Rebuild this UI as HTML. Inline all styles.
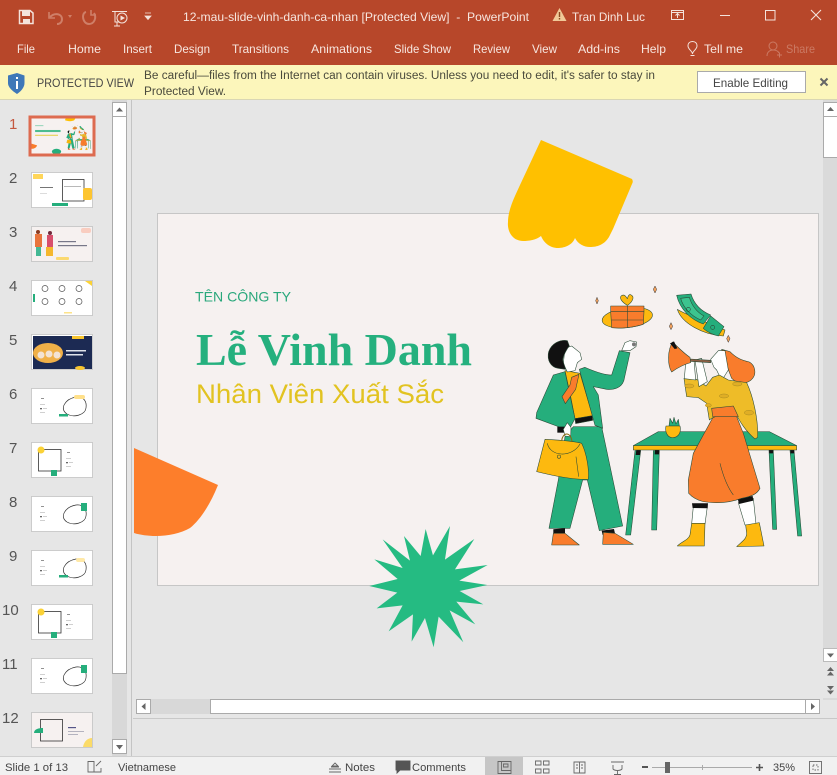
<!DOCTYPE html>
<html lang="en"><head><meta charset="utf-8"><title>PowerPoint</title>
<style>
html,body{margin:0;padding:0;background:#e6e6e6;overflow:hidden}
svg{display:block}
text{font-family:"Liberation Sans","Noto Sans CJK JP",sans-serif}
.t{fill:#f7e6df;font-size:12px}
.y{fill:#4a4a3c;font-size:11.5px}
.s{fill:#444;font-size:11px}
.n{fill:#555;font-size:15px}
</style></head><body>
<svg xmlns="http://www.w3.org/2000/svg" width="837" height="775" viewBox="0 0 837 775">
<defs>
<g id="ill">
 <!-- table, woman, gift, money: coordinates in 3x crop space from (590,280) -->
 <g transform="translate(590,280) scale(.3333)" stroke="#2a4a36" stroke-width="1.700" stroke-linejoin="round">
  <path d="M135 512H152L122 765H107Z M190 512H208L200 750H185Z M537 510H550L560 748H548Z M600 510H612L635 768H623Z" fill="#25ae7c"/>
  <path d="M139 510H152L150 525H137Z M195 510H208L207 523H194Z M537 508H549L549 520H538Z M601 508H612L613 520H602Z" fill="#111" stroke="none"/>
  <path d="M205 455H538L620 497H130Z" fill="#25ae7c"/>
  <path d="M130 497H620V510H130Z" fill="#fdb90f"/>
  <path d="M237 438L240 415L248 430L252 412L258 432L265 418L268 438Z" fill="#25ae7c"/>
  <path d="M228 438H270C274 455 268 472 248 473C232 473 224 455 228 438Z" fill="#fdb90f"/>
  <path d="M310 680L352 680L345 732H305Z M445 668L490 655L498 732L465 735Z" fill="#fff"/>
  <path d="M306 670L354 670L353 685L308 684Z M443 655L488 648L490 662L447 672Z" fill="#111" stroke="none"/>
  <path d="M305 730L345 730L343 798H262C275 785 295 780 300 765Z M467 735L508 728L522 798L440 800C455 785 470 778 470 760Z" fill="#fdb90f"/>
  <path d="M395 208L420 215C440 235 455 240 478 246C495 255 500 280 488 295C475 312 445 315 425 295C415 270 405 240 395 208Z" fill="#f97c2c"/>
  <path d="M362 238L385 212L405 212L415 270L395 302L380 270L372 262Z" fill="#fff"/>
  <path d="M370 410H440L460 460L510 625C500 645 480 650 455 655C420 668 385 672 340 665C320 660 305 650 296 640L295 600L310 520Z" fill="#f97c2c"/>
  <path d="M390 550C400 590 415 625 430 645" fill="none"/>
  <path d="M282 295L320 298L348 318L368 292L388 285L415 300L470 308C490 350 505 420 503 472L495 477C470 455 450 430 430 385L365 415L358 420L350 370L325 353L290 350Z" fill="#eebc28"/>
  <path d="M365 385L430 378L445 410H368Z" fill="#f97c2c"/>
  <g fill="#e0ae25" stroke="#a98a20" stroke-width="1.500"><ellipse cx="402" cy="348" rx="14" ry="6"/><ellipse cx="442" cy="312" rx="14" ry="6"/><ellipse cx="477" cy="398" rx="14" ry="7"/><ellipse cx="355" cy="376" rx="9" ry="5"/><ellipse cx="298" cy="318" rx="14" ry="6"/></g>
  <path d="M287 250L312 240L317 300L283 296Z M315 240L335 235L352 305L327 320Z" fill="#fff"/>
  <path d="M300 237L362 241V248L300 244Z" fill="#8f5e44"/>
  <path d="M248 186C262 200 285 222 300 232L302 248C285 252 265 262 245 276C232 255 232 210 248 186Z" fill="#f97c2c"/>
  <path d="M240 190L252 184L262 205L254 207Z" fill="#111" stroke="none"/>
  <ellipse cx="112" cy="113" rx="76" ry="30" transform="rotate(-7 112 113)" fill="#fdb90f"/>
  <path d="M62 78H162V94L160 133C130 143 90 146 65 143L62 94Z" fill="#f97c2c"/>
  <path d="M62 94H162M112 78V143M65 120H160" fill="none"/>
  <path d="M112 76C95 66 85 52 96 46C104 43 108 50 112 56C116 42 120 42 125 46C135 52 125 68 112 76Z" fill="#fdb90f"/>
  <path d="M262 88C275 130 340 165 400 168L405 150C360 130 300 110 262 88Z" fill="#fdb90f"/>
  <path d="M260 46L303 42C310 65 325 90 362 105L340 132C305 120 270 90 260 46Z" fill="#25ae7c"/>
  <path d="M272 55L298 52C305 75 318 95 342 108L332 120C305 108 280 85 272 55Z" fill="#3cc48f"/>
  <path d="M362 108L402 140L385 168C370 165 350 155 340 145Z" fill="#25ae7c"/>
  <circle cx="295" cy="88" r="6" fill="none"/><circle cx="368" cy="142" r="6" fill="none"/>
  <path d="M21 52L25 62L21 72L17 62Z M195 18L200 28L195 39L190 28Z M243 128L248 139L243 149L238 139Z M415 166L420 176L415 187L410 176Z" fill="#f5a25d" stroke="#333" stroke-width="1.500"/>
 </g>
 <!-- man: 3x crop space from (530,280) -->
 <g transform="translate(530,280) scale(.3333)" stroke="#2a4a36" stroke-width="1.700" stroke-linejoin="round">
  <path d="M130 440L215 440L278 738L208 752L172 600L158 600L120 745L57 745L85 600L105 470Z" fill="#25ae7c"/>
  <path d="M70 748L105 745V765H70Z M215 752L252 747L256 765H218Z" fill="#111" stroke="none"/>
  <path d="M70 760L105 760L148 795H65Z M220 757L255 760L310 793H218Z" fill="#f97c2c"/>
  <path d="M105 272L150 280L188 408L135 416L122 350Z" fill="#fdb90f"/>
  <path d="M135 416L187 407L188 421L137 431Z" fill="#111"/>
  <path d="M70 285L20 398L18 415L85 440L110 462L135 416L105 275Z" fill="#25ae7c"/>
  <path d="M148 268L165 262C195 275 225 285 245 285L268 212L300 218L282 300C275 325 250 330 230 328L190 320L205 345L218 445L195 436Z" fill="#25ae7c"/>
  <path d="M82 440H108V458H82Z" fill="#111" stroke="none"/>
  <path d="M100 448L112 428L123 442L122 470L105 468Z" fill="#fff"/>
  <path d="M125 292L147 283L137 328L106 371L96 350L120 315Z" fill="#f97c2c"/>
  <path d="M105 205L125 198L150 218L155 238L142 248L135 272L112 276L100 250Z" fill="#fff"/>
  <path d="M112 182C90 178 65 190 56 215C50 240 62 262 85 265L107 268L98 240C100 225 112 205 118 198Z" fill="#111"/>
  <path d="M275 212L285 188L300 182L320 186L318 200L300 212Z" fill="#fff"/>
  <circle cx="312" cy="193" r="6" fill="#777" stroke="none"/>
  <path d="M95 482C97 458 122 452 126 485" fill="none" stroke-width="3" stroke="#8a6a10"/>
  <path d="M45 478C80 480 125 482 155 490C170 520 178 570 175 598C130 600 60 585 20 575Z" fill="#fdb90f"/>
  <path d="M52 490C60 530 125 535 150 492M138 530L146 590" fill="none"/>
  <circle cx="87" cy="530" r="5" fill="#fdb90f"/>
 </g>
</g>
<path id="oval" d="M14 1C22 0 25 6 24 12C23 19 12 22 5 18C-3 13 3 3 14 1Z" fill="none" stroke="#333" stroke-width=".7"/>
<g id="lines" fill="#bbb"><rect x="0" y="0" width="3" height=".8" fill="#777"/><rect x="-1" y="6" width="5" height=".7"/><rect x="-1" y="10" width="2" height="1.300" fill="#666"/><rect x="2" y="10" width="4" height=".7"/><rect x="-1" y="14" width="5" height=".7"/></g>
</defs>

<rect width="837" height="775" fill="#e6e6e6"/>

<!-- title + tab bar -->
<rect width="837" height="65" fill="#b7472a"/>
<g fill="none" stroke="#f4e3dc">
 <path d="M19.500 10.500H30L33 13V23.500H19.500Z" stroke-width="1.500"/>
 <rect x="22" y="11" width="8" height="5" fill="#f4e3dc" stroke="none"/>
 <rect x="23" y="19" width="7" height="5" fill="#f4e3dc" stroke="none"/>
</g>
<g fill="none" stroke="#cf7f68" stroke-width="2">
 <path d="M50 17C55 12 62 14 62 19C62 22 60 24 57 24"/><path d="M49 12V18H55" stroke-width="1.600"/>
 <path d="M86 12C81 13 82.500 24 89 24C94 24 97 18 94 13"/><path d="M91 10V15H96" stroke-width="1.600"/>
</g>
<path d="M68 15L72 15L70 18Z" fill="#cf7f68"/>
<g fill="none" stroke="#f4e3dc" stroke-width="1">
 <path d="M112 11.500H127M115 11.500V22H119M117 22V26M114 26H120"/>
 <circle cx="122" cy="18" r="5"/>
 <path d="M120.500 15.500L125 18L120.500 20.500Z" fill="#f4e3dc" stroke="none"/>
</g>
<path d="M145 13H151M145 16H151L148 19.500Z" fill="#f4e3dc" stroke="#f4e3dc" stroke-width=".8"/>
<text class="t" x="183" y="21" textLength="346" lengthAdjust="spacingAndGlyphs" xml:space="preserve">12-mau-slide-vinh-danh-ca-nhan [Protected View]  -  PowerPoint</text>
<path d="M559.500 8L566.500 21H552.500Z" fill="#f1c998"/><rect x="558.800" y="12" width="1.400" height="5" fill="#8a4a20"/><rect x="558.800" y="18" width="1.400" height="1.500" fill="#8a4a20"/>
<text class="t" x="572" y="21" textLength="73" lengthAdjust="spacingAndGlyphs">Tran Dinh Luc</text>
<g fill="none" stroke="#f4e3dc" stroke-width="1">
 <rect x="671.500" y="10.500" width="12" height="9"/><path d="M671.500 12.500H683.500M677.500 18V14M675.500 15.500L677.500 13.500L679.500 15.500"/>
 <path d="M720 15.500H730"/><rect x="765.500" y="10.500" width="9.500" height="9.500"/>
 <path d="M811 10L821 20M821 10L811 20" stroke-width="1.100"/>
</g>
<text class="t" x="17" y="53" textLength="18" lengthAdjust="spacingAndGlyphs">File</text>
<text class="t" x="68" y="53" textLength="33" lengthAdjust="spacingAndGlyphs">Home</text>
<text class="t" x="123" y="53" textLength="29" lengthAdjust="spacingAndGlyphs">Insert</text>
<text class="t" x="174" y="53" textLength="36" lengthAdjust="spacingAndGlyphs">Design</text>
<text class="t" x="232" y="53" textLength="57" lengthAdjust="spacingAndGlyphs">Transitions</text>
<text class="t" x="311" y="53" textLength="61" lengthAdjust="spacingAndGlyphs">Animations</text>
<text class="t" x="394" y="53" textLength="57" lengthAdjust="spacingAndGlyphs">Slide Show</text>
<text class="t" x="473" y="53" textLength="37" lengthAdjust="spacingAndGlyphs">Review</text>
<text class="t" x="532" y="53" textLength="25" lengthAdjust="spacingAndGlyphs">View</text>
<text class="t" x="578" y="53" textLength="42" lengthAdjust="spacingAndGlyphs">Add-ins</text>
<text class="t" x="641" y="53" textLength="25" lengthAdjust="spacingAndGlyphs">Help</text>
<text class="t" x="704" y="53" textLength="39" lengthAdjust="spacingAndGlyphs">Tell me</text>
<text x="786" y="53" font-size="12" fill="#cb7a64" textLength="29" lengthAdjust="spacingAndGlyphs">Share</text>
<path d="M692.500 54C692.500 51 688 49.500 688 46C688 43 690 41.500 692.500 41.500C695 41.500 697 43 697 46C697 49.500 692.500 51 692.500 54ZM690.500 55.500H694.500" fill="none" stroke="#f4e3dc" stroke-width="1"/>
<g fill="none" stroke="#cb7a64" stroke-width="1"><circle cx="773" cy="46" r="4"/><path d="M767 56C767 51 771 50 773 50C776 50 778 51 779 53M777 55H782M779.500 52.500V57.500"/></g>

<!-- protected view bar -->
<rect y="65" width="837" height="34" fill="#fcf6bb"/>
<rect y="99" width="837" height="1" fill="#d9d6b4"/>
<path d="M17 73L24.500 75.500V83C24.500 88 20 92 17 94C14 92 8 88 8 83V75.500Z" fill="#3f78b8"/>
<rect x="16" y="77" width="2" height="2" fill="#fff"/><rect x="16" y="81" width="2" height="8" fill="#fff"/>
<text x="37" y="87" font-size="12" fill="#444" textLength="97" lengthAdjust="spacingAndGlyphs">PROTECTED VIEW</text>
<text class="y" x="144" y="79" textLength="511" lengthAdjust="spacingAndGlyphs">Be careful—files from the Internet can contain viruses. Unless you need to edit, it's safer to stay in</text>
<text class="y" x="144" y="95" textLength="82" lengthAdjust="spacingAndGlyphs">Protected View.</text>
<rect x="697.500" y="71.500" width="108" height="21" fill="#fff" stroke="#aaa"/>
<text x="713" y="87" font-size="12" fill="#444" textLength="75" lengthAdjust="spacingAndGlyphs">Enable Editing</text>
<path d="M820.500 78.500L827.500 85.500M827.500 78.500L820.500 85.500" stroke="#666" stroke-width="2"/>

<!-- left pane -->
<rect x="131" y="100" width="1" height="656" fill="#c4c4c4"/>
<rect x="112" y="100" width="15" height="656" fill="#d8d8d8"/>
<rect x="112.500" y="102.500" width="14" height="14" fill="#fff" stroke="#aaa"/>
<rect x="112.500" y="116.500" width="14" height="557" fill="#fff" stroke="#aaa"/>
<rect x="112.500" y="739.500" width="14" height="14" fill="#fff" stroke="#aaa"/>
<path d="M116 111.500H123L119.500 107.500Z M116 745H123L119.500 749.500Z" fill="#666"/>

<text class="n" x="9" y="129" style="fill:#c4583f">1</text>
<text class="n" x="9" y="183">2</text><text class="n" x="9" y="237">3</text><text class="n" x="9" y="291">4</text>
<text class="n" x="9" y="345">5</text><text class="n" x="9" y="399">6</text><text class="n" x="9" y="453">7</text>
<text class="n" x="9" y="507">8</text><text class="n" x="9" y="561">9</text>
<text class="n" x="2" y="615">10</text><text class="n" x="2" y="669">11</text><text class="n" x="2" y="723">12</text>

<!-- thumb 1 -->
<rect x="30" y="117" width="64" height="38" fill="#f6f1f0" stroke="#dd6b50" stroke-width="3"/>
<svg x="31.500" y="118.500" width="61" height="35" viewBox="157 213 661 372" preserveAspectRatio="none">
 <use href="#ill"/>
 <rect x="196" y="285" width="90" height="9" fill="#7fcfae"/>
 <rect x="196" y="335" width="276" height="22" fill="#4cbc90"/>
 <rect x="196" y="385" width="248" height="14" fill="#e8d66a"/>
 <path d="M530 200H640L620 232C600 245 550 245 520 232Z" fill="#ffc000"/>
 <path d="M157 480L218 498C210 520 190 535 157 535Z" fill="#f97c2c"/>
 <ellipse cx="428" cy="565" rx="50" ry="30" fill="#25ae7c"/>
</svg>
<g fill="#fff" stroke="#c2c2c2" stroke-width=".8">
 <rect x="31.500" y="172.500" width="61" height="35"/>
 <rect x="31.500" y="226.500" width="61" height="35" fill="#f6f1f0"/>
 <rect x="31.500" y="280.500" width="61" height="35"/>
 <rect x="31.500" y="334.500" width="61" height="35" fill="#fff"/>
 <rect x="31.500" y="388.500" width="61" height="35"/>
 <rect x="31.500" y="442.500" width="61" height="35"/>
 <rect x="31.500" y="496.500" width="61" height="35"/>
 <rect x="31.500" y="550.500" width="61" height="35"/>
 <rect x="31.500" y="604.500" width="61" height="35"/>
 <rect x="31.500" y="658.500" width="61" height="35"/>
 <rect x="31.500" y="712.500" width="61" height="35" fill="#f6f1f0"/>
</g>
<!-- thumb 2 -->
<rect x="33" y="174" width="10" height="5" fill="#ffd65a"/><rect x="40" y="187" width="13" height=".9" fill="#666"/><rect x="40" y="193" width="7" height=".7" fill="#ccc"/>
<rect x="62.500" y="179.500" width="21.500" height="21.500" fill="#fff" stroke="#333" stroke-width=".8"/><rect x="64" y="186" width="17" height=".7" fill="#999"/>
<rect x="83" y="188" width="9" height="12" rx="2" fill="#fdc531"/><rect x="52" y="203" width="16" height="3" fill="#25ae7c"/>
<!-- thumb 3 -->
<rect x="35" y="234" width="7" height="13" fill="#e8743c"/><rect x="36" y="247" width="5" height="9" fill="#45b894"/><circle cx="38" cy="232" r="2" fill="#8a3a20"/>
<rect x="47" y="235" width="6" height="12" fill="#d84f6c"/><rect x="46" y="247" width="7" height="9" fill="#f5b72d"/><circle cx="50" cy="233" r="2" fill="#702a3a"/>
<rect x="58" y="241" width="18" height="1.200" fill="#778"/><rect x="58" y="245" width="29" height="1.200" fill="#778"/>
<rect x="81" y="228" width="10" height="5" rx="2" fill="#f9cdc0"/><rect x="56" y="257" width="13" height="3" rx="1" fill="#fbd970"/>
<!-- thumb 4 -->
<g fill="none" stroke="#555" stroke-width=".7">
 <circle cx="45" cy="288.500" r="3"/><circle cx="62" cy="288.500" r="3"/><circle cx="79" cy="288.500" r="3"/>
 <circle cx="45" cy="301.500" r="3"/><circle cx="62" cy="301.500" r="3"/><circle cx="79" cy="301.500" r="3"/>
</g>
<path d="M85 281H92V286Z" fill="#fbd236"/><rect x="33" y="294" width="2" height="8" fill="#25ae7c"/><rect x="64" y="312" width="8" height="1.500" fill="#fde38a"/>
<!-- thumb 5 -->
<rect x="33" y="336" width="59" height="33" fill="#1c2a53"/>
<ellipse cx="48" cy="353" rx="15" ry="10" fill="#f0b048"/><circle cx="41" cy="355" r="3.500" fill="#f3e3d4"/><circle cx="49" cy="354" r="3.500" fill="#f3e3d4"/><circle cx="57" cy="355" r="3.500" fill="#f3e3d4"/>
<rect x="66" y="350" width="20" height="1.500" fill="#dfe3ea"/><rect x="66" y="354" width="17" height="1.500" fill="#dfe3ea"/>
<rect x="72" y="336" width="12" height="3" fill="#f8c52f"/><ellipse cx="80" cy="368" rx="5" ry="2" fill="#f8c52f"/>
<!-- thumb 6 -->
<use href="#oval" x="62" y="396"/><use href="#lines" x="41" y="398"/><rect x="74" y="395" width="11" height="4" rx="2" fill="#ffe08a"/><rect x="59" y="414" width="9" height="2.500" fill="#25ae7c"/>
<!-- thumb 7 -->
<rect x="38.500" y="449.500" width="22.500" height="21.500" fill="none" stroke="#333" stroke-width=".8"/><circle cx="41" cy="450" r="3.500" fill="#fbd236"/><rect x="51" y="470" width="6" height="6" fill="#25ae7c"/><use href="#lines" x="67" y="452"/>
<!-- thumb 8 -->
<use href="#oval" x="62" y="504"/><use href="#lines" x="41" y="506"/><rect x="81" y="503" width="6" height="8" fill="#25ae7c"/>
<!-- thumb 9 -->
<use href="#oval" x="62" y="558"/><use href="#lines" x="41" y="560"/><rect x="76" y="558" width="9" height="4" rx="2" fill="#ffe9a8"/><rect x="59" y="575" width="9" height="2.500" fill="#25ae7c"/>
<!-- thumb 10 -->
<rect x="38.500" y="611.500" width="22.500" height="21.500" fill="none" stroke="#333" stroke-width=".8"/><circle cx="41" cy="612" r="3.500" fill="#fbd236"/><rect x="51" y="632" width="6" height="6" fill="#25ae7c"/><use href="#lines" x="67" y="614"/>
<!-- thumb 11 -->
<use href="#oval" x="62" y="666"/><use href="#lines" x="41" y="668"/><rect x="81" y="665" width="6" height="8" fill="#25ae7c"/>
<!-- thumb 12 -->
<rect x="40.500" y="719.500" width="22" height="21.500" fill="none" stroke="#333" stroke-width=".8"/><path d="M34 733C34 729 39 728 43 728V733Z" fill="#25ae7c"/><rect x="68" y="727" width="8" height="1.200" fill="#558"/><rect x="68" y="731" width="16" height=".7" fill="#99a"/><rect x="68" y="734" width="10" height=".7" fill="#99a"/><path d="M83 747L92 747V738C88 738 84 741 83 747Z" fill="#fbdb68"/>

<!-- main scrollbars -->
<rect x="823" y="100" width="14" height="600" fill="#dadada"/>
<rect x="823.500" y="102.500" width="14" height="14" fill="#fff" stroke="#aaa"/>
<rect x="823.500" y="116.500" width="14" height="41" fill="#fff" stroke="#aaa"/>
<rect x="823.500" y="648.500" width="14" height="13" fill="#fff" stroke="#bbb"/>
<path d="M827 111H834L830.500 107Z M827 653.500H834L830.500 657.500Z" fill="#666"/>
<rect x="823" y="662" width="14" height="36" fill="#e6e6e6"/>
<path d="M827 671H834L830.500 667ZM827 675.500H834L830.500 671.500Z M827 686H834L830.500 690ZM827 690.500H834L830.500 694.500Z" fill="#666"/>
<rect x="136" y="699" width="684" height="15" fill="#d8d8d8"/>
<rect x="136.500" y="699.500" width="14" height="14" fill="#fff" stroke="#aaa"/>
<rect x="210.500" y="699.500" width="595" height="14" fill="#fff" stroke="#aaa"/>
<rect x="805.500" y="699.500" width="14" height="14" fill="#fff" stroke="#aaa"/>
<path d="M145.500 703V710L141.500 706.500Z M811 703V710L815 706.500Z" fill="#666"/>
<rect x="133" y="718" width="704" height="1" fill="#c8c8c8"/>

<!-- slide -->
<rect x="157.500" y="213.500" width="661" height="372" fill="#f6f1f0" stroke="#c6c6c6"/>
<text x="195" y="301.500" font-size="14" fill="#2aa87c" textLength="96" lengthAdjust="spacingAndGlyphs">TÊN CÔNG TY</text>
<text x="196" y="365" font-size="46" font-weight="bold" fill="#25b07e" textLength="276" lengthAdjust="spacingAndGlyphs" style="font-family:'Liberation Serif',serif">Lễ Vinh Danh</text>
<text x="196" y="403" font-size="27" fill="#e2c321" textLength="248" lengthAdjust="spacingAndGlyphs">Nhân Viên Xuất Sắc</text>
<path d="M541 140L632 179C633 181 633 182 632 184L613 229C611 233 610 235 609 237C604 245 597 247 590 247C584 247 578 244 575 238C572 246 563 248 558 248C550 248 544 243 541 236C536 240 529 241 523 241C513 241 507 232 508 222C508 210 514 198 520 185Z" fill="#ffc000"/>
<path d="M134 448L218 485C210 505 200 520 190 528C175 537 150 538 134 533Z" fill="#fd7e2b"/>
<g transform="translate(130,430) scale(.3333)">
<path fill="#25bb82" d="M887 297L909 376L960 288L945 389L1033 327L975 418L1073 405L988 452L1072 465L989 483L1060 523L979 515L1036 583L959 541L1000 637L926 560L911 652L885 564L845 635L849 553L776 604L818 526L740 535L802 488L718 468L803 447L733 388L818 414L758 328L840 392L822 318L872 378Z"/>
</g>
<use href="#ill"/>

<!-- status bar -->
<rect y="756" width="837" height="19" fill="#f1f1f1"/>
<rect y="756" width="837" height="1" fill="#cfcfcf"/>
<text class="s" x="5" y="771" textLength="63" lengthAdjust="spacingAndGlyphs">Slide 1 of 13</text>
<rect x="485" y="757" width="38" height="18" fill="#c6c6c6"/>
<g fill="none" stroke="#666" stroke-width=".9">
 <path d="M88 761.500H94V772H88ZM94 772H101V768M96 766L101 761"/>
 <path d="M329 769H341M329 772H341M331 767H339M335 763L338 766H332Z"/>
 <path d="M396 761H410V770H400L397 773V770H396Z" fill="#555" stroke="#555"/>
 <path d="M498 761.500H511V773.500H498ZM501.500 761.500V770.500H511M503.500 764H508V767H503.500Z"/>
 <path d="M535.500 761H541V765H535.500ZM543.500 761H549V765H543.500ZM535.500 769H541V773H535.500ZM543.500 769H549V773H543.500Z"/>
 <path d="M574 762H585V773H574ZM579.500 762V773M576 765H578M576 768H578M581 765H583M581 768H583"/>
 <path d="M611 762H624M613 765V769C615 771 620 771 622 769V765M617.500 771V774M614 774.500H621"/>
 <rect x="809.500" y="761.500" width="12" height="12"/>
 <path d="M813 765H818V770H813Z" stroke-dasharray="1.500 1.500"/>
</g>
<text class="s" x="118" y="771" textLength="58" lengthAdjust="spacingAndGlyphs">Vietnamese</text>
<text class="s" x="345" y="771" textLength="30" lengthAdjust="spacingAndGlyphs">Notes</text>
<text class="s" x="412" y="771" textLength="54" lengthAdjust="spacingAndGlyphs">Comments</text>
<path d="M642 767H648" stroke="#555" stroke-width="2"/>
<path d="M652 767.500H752" stroke="#aaa"/><path d="M702.500 765V770" stroke="#aaa"/>
<rect x="665" y="762" width="5" height="11" fill="#666"/>
<path d="M756 767.500H763M759.500 764V771" stroke="#555" stroke-width="1.600"/>
<text class="s" x="773" y="771" textLength="22" lengthAdjust="spacingAndGlyphs">35%</text>
</svg>
</body></html>
